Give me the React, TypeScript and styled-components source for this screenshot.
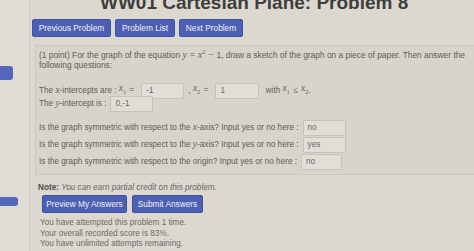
import React from "react";
import styled, { createGlobalStyle } from "styled-components";

const GlobalStyle = createGlobalStyle`
  html, body {
    margin: 0;
    padding: 0;
    background: #dcd8cf;
    overflow: hidden;
  }
  body {
    font-family: "Liberation Sans", Arial, sans-serif;
    color: #5c5c5a;
  }
`;

const Page = styled.div`
  display: flex;
  width: 474px;
  height: 251px;
  overflow: hidden;
`;

const Sidebar = styled.div`
  width: 29px;
  flex-shrink: 0;
  background: #e0ddd6;
  border-right: 1px solid #d2cec5;
  position: relative;
`;

const SideTab = styled.div<{ $top: number; $w: number; $h: number }>`
  position: absolute;
  left: 0;
  top: ${({ $top }) => $top}px;
  width: ${({ $w }) => $w}px;
  height: ${({ $h }) => $h}px;
  background: #5467b8;
  border-radius: 0 3px 3px 0;
`;

const Main = styled.div`
  flex: 1;
  padding-left: 2px;
  min-width: 0;
`;

const Title = styled.h1`
  margin: -9px 0 0 68px;
  font-size: 19px;
  font-weight: bold;
  color: #3e3e3e;
  white-space: nowrap;
  line-height: 24px;
`;

const NavBar = styled.div`
  display: flex;
  gap: 4px;
  margin-top: 4px;
`;

const Button = styled.button<{ $w: number }>`
  width: ${({ $w }) => $w}px;
  height: 18px;
  padding: 0;
  border: 1px solid #3f51a3;
  border-radius: 2px;
  background: #4d5fb3;
  color: #f2f2f6;
  font-family: "Liberation Sans", Arial, sans-serif;
  font-size: 8.3px;
  text-align: center;
`;

const Panel = styled.div`
  margin: 8px 0 0 3px;
  padding: 2px 0 4px 3px;
  background: #d8d4cb;
  border: 1px solid #ccc8bf;
  border-right: none;
  font-size: 8.2px;
  line-height: 9.5px;
`;

const Intro = styled.p`
  margin: 0 0 15px;
  font-size: 8.4px;
  white-space: nowrap;
`;

const Row = styled.div<{ $h: number }>`
  display: flex;
  align-items: center;
  height: ${({ $h }) => $h}px;
  white-space: nowrap;
`;

const M = styled.span`
  font-family: "Liberation Serif", "Times New Roman", serif;
  font-style: italic;
  font-size: 9.5px;
  sub, sup {
    font-size: 6px;
    font-style: normal;
  }
`;

const Op = styled.span`
  font-family: "Liberation Serif", serif;
  font-size: 9.5px;
  margin: 0 3px;
`;

const Field = styled.span<{ $w?: number }>`
  display: inline-flex;
  align-items: center;
  box-sizing: border-box;
  width: ${({ $w }) => $w ?? 43}px;
  height: 16px;
  margin: 0 4px;
  padding-left: 4px;
  background: #e1ded7;
  border: 1px solid #c6c2b8;
  border-radius: 1px;
  color: #666;
`;

const Note = styled.p`
  margin: 8px 0 0 6px;
  font-size: 8.2px;
  b {
    color: #4c4c4c;
  }
  i {
    color: #666;
  }
`;

const ActionBar = styled.div`
  display: flex;
  gap: 5px;
  margin: 3px 0 0 10px;
`;

const Messages = styled.div`
  margin: 5px 0 0 8px;
  font-size: 8.2px;
  line-height: 10.5px;
  color: #6a6a68;
`;

export default function App() {
  return (
    <>
      <GlobalStyle />
      <Page>
        <Sidebar>
          <SideTab $top={66} $w={13} $h={14} />
          <SideTab $top={197} $w={18} $h={9} />
        </Sidebar>
        <Main>
          <Title>WW01 Cartesian Plane: Problem 8</Title>
          <NavBar>
            <Button $w={79}>Previous Problem</Button>
            <Button $w={60}>Problem List</Button>
            <Button $w={64}>Next Problem</Button>
          </NavBar>
          <Panel>
            <Intro>
              (1 point) For the graph of the equation <M>y</M>
              <Op>=</Op>
              <M>
                x<sup>2</sup>
              </M>
              <Op>−</Op>1, draw a sketch of the graph on a piece of paper. Then answer the
              <br />
              following questions:
            </Intro>
            <Row $h={12}>
              The&nbsp;<M>x</M>-intercepts are :&nbsp;
              <M>
                x<sub>1</sub>
              </M>
              <Op>=</Op>
              <Field>-1</Field>,&nbsp;
              <M>
                x<sub>2</sub>
              </M>
              <Op>=</Op>
              <Field $w={44}>1</Field>
              &nbsp;with&nbsp;
              <M>
                x<sub>1</sub>
              </M>
              <Op>≤</Op>
              <M>
                x<sub>2</sub>
              </M>
              .
            </Row>
            <Row $h={14}>
              The&nbsp;<M>y</M>-intercept is :<Field>0,-1</Field>
            </Row>
            <Row $h={8} />
            <Row $h={17}>
              Is the graph symmetric with respect to the&nbsp;<M>x</M>-axis? Input yes or no here :
              <Field>no</Field>
            </Row>
            <Row $h={17}>
              Is the graph symmetric with respect to the&nbsp;<M>y</M>-axis? Input yes or no here :
              <Field>yes</Field>
            </Row>
            <Row $h={17}>
              Is the graph symmetric with respect to the origin? Input yes or no here :
              <Field $w={41}>no</Field>
            </Row>
          </Panel>
          <Note>
            <b>Note:</b> <i>You can earn partial credit on this problem.</i>
          </Note>
          <ActionBar>
            <Button $w={85}>Preview My Answers</Button>
            <Button $w={71}>Submit Answers</Button>
          </ActionBar>
          <Messages>
            You have attempted this problem 1 time.
            <br />
            Your overall recorded score is 83%.
            <br />
            You have unlimited attempts remaining.
          </Messages>
        </Main>
      </Page>
    </>
  );
}
